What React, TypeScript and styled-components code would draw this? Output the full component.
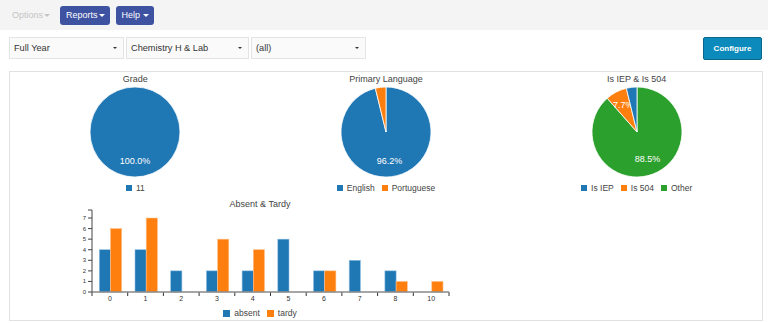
import styled, { createGlobalStyle } from 'styled-components'

const BLUE = '#1f77b4'
const ORANGE = '#ff7f0e'
const GREEN = '#2ca02c'

const GlobalStyle = createGlobalStyle`
  html, body {
    margin: 0;
    padding: 0;
    background: #fff;
    font-family: 'Liberation Sans', Arial, sans-serif;
  }
`

type Slice = { label: string; value: number; color: string }

const pies: { title: string; slices: Slice[] }[] = [
  { title: 'Grade', slices: [{ label: '11', value: 100, color: BLUE }] },
  {
    title: 'Primary Language',
    slices: [
      { label: 'English', value: 96.2, color: BLUE },
      { label: 'Portuguese', value: 3.8, color: ORANGE },
    ],
  },
  {
    title: 'Is IEP & Is 504',
    slices: [
      { label: 'Is IEP', value: 3.8, color: BLUE },
      { label: 'Is 504', value: 7.7, color: ORANGE },
      { label: 'Other', value: 88.5, color: GREEN },
    ],
  },
]

const bars = [
  { key: '0', absent: 4, tardy: 6 },
  { key: '1', absent: 4, tardy: 7 },
  { key: '2', absent: 2, tardy: 0 },
  { key: '3', absent: 2, tardy: 5 },
  { key: '4', absent: 2, tardy: 4 },
  { key: '5', absent: 5, tardy: 0 },
  { key: '6', absent: 2, tardy: 2 },
  { key: '7', absent: 3, tardy: 0 },
  { key: '8', absent: 2, tardy: 1 },
  { key: '10', absent: 0, tardy: 1 },
]

function Pie({ slices }: { slices: Slice[] }) {
  const cx = 46
  const cy = 46
  const r = 45
  const sorted = [...slices].sort((a, b) => b.value - a.value)
  const total = sorted.reduce((s, d) => s + d.value, 0)
  let start = 0
  const point = (a: number, rad: number) => [cx + rad * Math.sin(a), cy - rad * Math.cos(a)]

  return (
    <svg width={92} height={92} viewBox='0 0 92 92'>
      {sorted.map((d) => {
        const a0 = start
        const a1 = start + (d.value / total) * Math.PI * 2
        start = a1
        const mid = (a0 + a1) / 2
        const [lx, ly] = point(mid, r * 0.66)
        const full = d.value >= total
        const [x0, y0] = point(a0, r)
        const [x1, y1] = point(a1, r)
        const large = a1 - a0 > Math.PI ? 1 : 0
        return (
          <g key={d.label}>
            {full ? (
              <circle cx={cx} cy={cy} r={r} fill={d.color} stroke='#fff' strokeWidth={0.8} />
            ) : (
              <path
                d={`M${cx},${cy} L${x0},${y0} A${r},${r} 0 ${large} 1 ${x1},${y1} Z`}
                fill={d.color}
                stroke='#fff'
                strokeWidth={0.8}
              />
            )}
            {d.value > 5 && (
              <PieLabel x={lx} y={ly} textAnchor='middle' dominantBaseline='middle'>
                {d.value.toFixed(1)}%
              </PieLabel>
            )}
          </g>
        )
      })}
    </svg>
  )
}

function BarChart() {
  const left = 22
  const base = 84
  const band = 35.7
  const unit = 10.57
  const bw = 11.2
  const right = left + band * bars.length

  return (
    <svg width={380} height={100} viewBox='0 0 380 100'>
      {bars.map((b, i) => {
        const x = left + i * band
        return (
          <g key={b.key}>
            {b.absent > 0 && (
              <rect
                x={x + 7.3}
                y={base - b.absent * unit}
                width={bw}
                height={b.absent * unit}
                fill={BLUE}
                stroke='#8fbfe3'
                strokeWidth={0.6}
              />
            )}
            {b.tardy > 0 && (
              <rect
                x={x + 7.3 + bw}
                y={base - b.tardy * unit}
                width={bw}
                height={b.tardy * unit}
                fill={ORANGE}
                stroke='#ffc08a'
                strokeWidth={0.6}
              />
            )}
            <line x1={x} x2={x} y1={base} y2={base + 4} stroke='#333' strokeWidth={1} />
            <AxisText x={x + band / 2} y={93} textAnchor='middle' fontSize={7}>
              {b.key}
            </AxisText>
          </g>
        )
      })}
      <line x1={right} x2={right} y1={base} y2={base + 4} stroke='#333' strokeWidth={1} />
      <line x1={left} x2={right} y1={base} y2={base} stroke='#888' strokeWidth={1.5} />
      <line x1={left} x2={left} y1={2} y2={base} stroke='#444' strokeWidth={1} />
      {Array.from({ length: 8 }, (_, v) => (
        <g key={v}>
          <line x1={left - 4} x2={left} y1={base - v * unit} y2={base - v * unit} stroke='#444' strokeWidth={1} />
          <AxisText x={left - 6} y={base - v * unit + 2} textAnchor='end' fontSize={6}>
            {v}
          </AxisText>
        </g>
      ))}
      <line x1={left - 4} x2={left} y1={2} y2={2} stroke='#444' strokeWidth={1} />
    </svg>
  )
}

export default function App() {
  return (
    <>
      <GlobalStyle />
      <TopBar>
        <MenuText>
          Options
          <CaretMark />
        </MenuText>
        <MenuButton>
          Reports
          <CaretMark />
        </MenuButton>
        <MenuButton>
          Help
          <CaretMark $gap={3} />
        </MenuButton>
      </TopBar>
      <FilterRow>
        <Select $width={115}>
          Full Year
          <SelectCaret />
        </Select>
        <Select $width={123}>
          Chemistry H &amp; Lab
          <SelectCaret />
        </Select>
        <Select $width={115}>
          (all)
          <SelectCaret />
        </Select>
        <Spacer />
        <ConfigureButton>Configure</ConfigureButton>
      </FilterRow>
      <Panel>
        <PieRow>
          {pies.map((p) => (
            <PieCell key={p.title}>
              <ChartTitle>{p.title}</ChartTitle>
              <Pie slices={p.slices} />
              <Legend>
                {p.slices.map((s) => (
                  <LegendItem key={s.label}>
                    <Swatch $color={s.color} />
                    {s.label}
                  </LegendItem>
                ))}
              </Legend>
            </PieCell>
          ))}
        </PieRow>
        <BarBlock>
          <ChartTitle>Absent &amp; Tardy</ChartTitle>
          <BarChart />
          <Legend>
            <LegendItem>
              <Swatch $color={BLUE} $size={7} />
              absent
            </LegendItem>
            <LegendItem>
              <Swatch $color={ORANGE} $size={7} />
              tardy
            </LegendItem>
          </Legend>
        </BarBlock>
      </Panel>
    </>
  )
}

const TopBar = styled.div`
  display: flex;
  align-items: center;
  gap: 6px;
  height: 30px;
  padding: 0 0 0 12px;
  background: #f4f4f4;
  font-size: 9px;
`

const MenuText = styled.div`
  display: flex;
  align-items: center;
  color: #c4c4c4;
  width: 42px;
`

const MenuButton = styled.div`
  display: flex;
  align-items: center;
  height: 19px;
  padding: 0 5px 0 6px;
  background: #3d52a1;
  border-radius: 3px;
  color: #fff;
`

const CaretMark = styled.span<{ $gap?: number }>`
  display: inline-block;
  margin-left: ${({ $gap }) => $gap ?? 1}px;
  width: 0;
  height: 0;
  border-left: 3px solid transparent;
  border-right: 3px solid transparent;
  border-top: 3px solid currentColor;
`

const FilterRow = styled.div`
  display: flex;
  align-items: center;
  gap: 2px;
  margin: 7px 6px 0 9px;
  height: 22px;
`

const Select = styled.div<{ $width: number }>`
  position: relative;
  box-sizing: border-box;
  display: flex;
  align-items: center;
  width: ${({ $width }) => $width}px;
  height: 22px;
  padding-left: 4px;
  background: #fafafa;
  border: 1px solid #e4e4e4;
  font-size: 9.2px;
  color: #333;
`

const SelectCaret = styled.span`
  position: absolute;
  right: 6px;
  top: 9px;
  width: 0;
  height: 0;
  border-left: 2px solid transparent;
  border-right: 2px solid transparent;
  border-top: 2px solid #333;
`

const Spacer = styled.div`
  flex: 1;
`

const ConfigureButton = styled.div`
  box-sizing: border-box;
  display: flex;
  align-items: center;
  justify-content: center;
  width: 59px;
  height: 23px;
  background: #0b8abb;
  border: 1px solid #08678b;
  border-radius: 2px;
  color: #fff;
  font-size: 8px;
  font-weight: 700;
`

const Panel = styled.div`
  box-sizing: border-box;
  margin: 12px 5px 0 9px;
  height: 250px;
  border: 1px solid #e2e2e2;
  padding-top: 1px;
`

const PieRow = styled.div`
  display: grid;
  grid-template-columns: repeat(3, 1fr);
`

const PieCell = styled.div`
  display: flex;
  flex-direction: column;
  align-items: center;

  svg {
    margin-top: 1px;
  }
`

const ChartTitle = styled.div`
  font-size: 9px;
  line-height: 12px;
  color: #444;
  text-align: center;
`

const Legend = styled.div`
  display: flex;
  justify-content: center;
  gap: 7px;
  margin-top: 5px;
  font-size: 8.5px;
  line-height: 10px;
  color: #444;
`

const LegendItem = styled.div`
  display: flex;
  align-items: center;
  gap: 4px;
`

const Swatch = styled.span<{ $color: string; $size?: number }>`
  display: inline-block;
  width: ${({ $size }) => $size ?? 6}px;
  height: ${({ $size }) => $size ?? 6}px;
  background: ${({ $color }) => $color};
`

const BarBlock = styled.div`
  display: flex;
  flex-direction: column;
  align-items: center;
  width: 380px;
  margin: 5px 0 0 60px;

  svg {
    margin-top: -2px;
  }

  ${Legend} {
    margin-top: 0;
  }
`

const PieLabel = styled.text`
  font-size: 9px;
  fill: #fff;
  font-family: 'Liberation Sans', Arial, sans-serif;
`

const AxisText = styled.text`
  fill: #333;
  font-family: 'Liberation Sans', Arial, sans-serif;
`
